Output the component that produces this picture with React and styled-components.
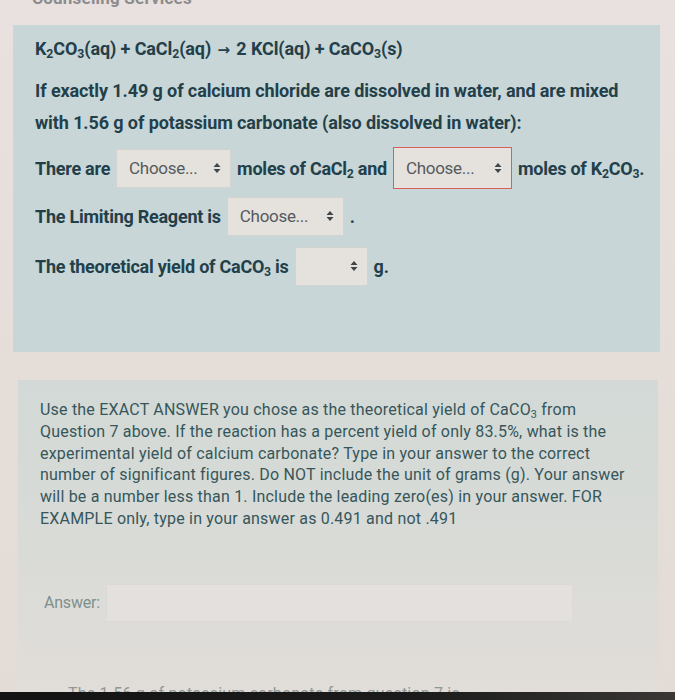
import React from "react";
import styled, { createGlobalStyle } from "styled-components";

const Global = createGlobalStyle`
  html, body {
    margin: 0;
    padding: 0;
    background: #e6dedb;
    font-family: Roboto, "Liberation Sans", Arial, sans-serif;
  }
`;

const Page = styled.div`
  width: 675px;
  height: 700px;
  overflow: hidden;
  background: linear-gradient(180deg, #e9e1df 0%, #e4ddd8 60%, #e2dbd6 100%);
`;

const Header = styled.div`
  height: 25px;
  overflow: hidden;
  padding-left: 32px;
  & span {
    display: block;
    margin-top: -12px;
    font-size: 17px;
    font-weight: 700;
    color: #8c8c8c;
    letter-spacing: 0.2px;
  }
`;

const QuestionPanel = styled.div`
  margin: 0 15px 0 13px;
  height: 327px;
  box-sizing: border-box;
  padding: 12px 6px 12px 22px;
  background: #c8d6d8;
  color: #23404a;
  font-weight: 700;
  font-size: 18px;
  letter-spacing: -0.1px;
`;

const Equation = styled.div`
  line-height: 24px;
`;

const Arrow = styled.span`
  font-family: "DejaVu Sans", sans-serif;
  font-size: 15px;
  margin: 0 2px;
`;

const Para = styled.p`
  margin: 13px 0 0;
  line-height: 32px;
`;

const Row = styled.div`
  display: flex;
  align-items: center;
  gap: 6px;
  height: 42px;
  margin-top: ${p => p.$mt || 9}px;
`;

const Label = styled.span`
  white-space: nowrap;
  letter-spacing: -0.25px;
`;

const Select = styled.div`
  display: flex;
  align-items: center;
  justify-content: ${p => (p.$empty ? "flex-end" : "space-between")};
  box-sizing: border-box;
  flex-shrink: 0;
  width: ${p => p.$w}px;
  height: ${p => (p.$error ? 42 : 39)}px;
  padding: 0 9px 0 12px;
  background: #e5e2de;
  border: ${p => (p.$error ? "1.5px solid #d4625b" : "1px solid #d3d4cf")};
  color: #555a5c;
  font-weight: 400;
  font-size: 17px;
  letter-spacing: -0.3px;
  white-space: nowrap;
`;

const Sub = styled.sub`
  font-size: 0.68em;
  vertical-align: -0.25em;
  line-height: 0;
`;

const Arrows = () => (
  <svg width="8" height="12" viewBox="0 0 8 12">
    <path d="M4 1 L7.5 5 H0.5 Z M4 11 L7.5 7 H0.5 Z" fill="#3e4548" />
  </svg>
);

const InfoPanel = styled.div`
  margin: 28px 17px 0 18px;
  height: 330px;
  box-sizing: border-box;
  padding: 19px 22px 0 22px;
  background: linear-gradient(180deg, #d2d9d6 0%, #d9dbd7 50%, #e2ddd9 100%);
  color: #36565a;
  font-size: 16px;
  letter-spacing: 0.2px;
`;

const InfoText = styled.p`
  margin: 0;
  line-height: 21.8px;
`;

const AnswerRow = styled.div`
  display: flex;
  align-items: center;
  gap: 6px;
  margin-top: 54px;
  padding-left: 4px;
`;

const AnswerLabel = styled.span`
  color: #7c908d;
  font-size: 16px;
  letter-spacing: -0.2px;
`;

const AnswerInput = styled.div`
  width: 467px;
  height: 38px;
  background: #e4e0dd;
  border: 1px solid #dcdad6;
  box-sizing: border-box;
`;

const NextText = styled.div`
  margin-top: 62px;
  padding-left: 28px;
  color: #8e9896;
  font-size: 16px;
`;

const Bezel = styled.div`
  position: fixed;
  left: 0;
  right: 0;
  bottom: 0;
  height: 8px;
  background: linear-gradient(90deg, #141414 0%, #1b1b1b 60%, #3a3735 100%);
`;

export default function App() {
  return (
    <Page>
      <Global />
      <Header>
        <span>Counseling Services</span>
      </Header>
      <QuestionPanel>
        <Equation>
          K<Sub>2</Sub>CO<Sub>3</Sub>(aq) + CaCl<Sub>2</Sub>(aq) <Arrow>→</Arrow> 2 KCl(aq) + CaCO<Sub>3</Sub>(s)
        </Equation>
        <Para>
          If exactly 1.49 g of calcium chloride are dissolved in water, and are mixed
          <br />
          with 1.56 g of potassium carbonate (also dissolved in water):
        </Para>
        <Row $mt={8}>
          <Label>There are</Label>
          <Select $w={115}>
            Choose... <Arrows />
          </Select>
          <Label>
            moles of CaCl<Sub>2</Sub> and
          </Label>
          <Select $w={119} $error>
            Choose... <Arrows />
          </Select>
          <Label>
            moles of K<Sub>2</Sub>CO<Sub>3</Sub>.
          </Label>
        </Row>
        <Row $mt={6}>
          <Label>The Limiting Reagent is</Label>
          <Select $w={117}>
            Choose... <Arrows />
          </Select>
          <Label>.</Label>
        </Row>
        <Row $mt={8}>
          <Label>
            The theoretical yield of CaCO<Sub>3</Sub> is
          </Label>
          <Select $w={73} $empty>
            <Arrows />
          </Select>
          <Label>g.</Label>
        </Row>
      </QuestionPanel>
      <InfoPanel>
        <InfoText>
          Use the EXACT ANSWER you chose as the theoretical yield of CaCO<Sub>3</Sub> from
          <br />
          Question 7 above. If the reaction has a percent yield of only 83.5%, what is the
          <br />
          experimental yield of calcium carbonate? Type in your answer to the correct
          <br />
          number of significant figures. Do NOT include the unit of grams (g). Your answer
          <br />
          will be a number less than 1. Include the leading zero(es) in your answer. FOR
          <br />
          EXAMPLE only, type in your answer as 0.491 and not .491
        </InfoText>
        <AnswerRow>
          <AnswerLabel>Answer:</AnswerLabel>
          <AnswerInput />
        </AnswerRow>
        <NextText>The 1.56 g of potassium carbonate from question 7 is</NextText>
      </InfoPanel>
      <Bezel />
    </Page>
  );
}
